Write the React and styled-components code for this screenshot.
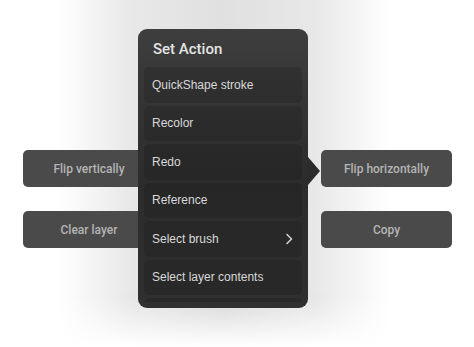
import React from "react";
import styled, { createGlobalStyle } from "styled-components";

const Global = createGlobalStyle`
  html, body { margin: 0; padding: 0; background: #fff; }
  * { box-sizing: border-box; }
`;

const Page = styled.div`
  width: 474px;
  height: 347px;
  overflow: hidden;
  display: flex;
  align-items: flex-start;
  padding: 29px 0 0 23px;
  font-family: "Liberation Sans", Arial, sans-serif;
  background:
    linear-gradient(to bottom, rgba(255,255,255,0) 296px, #fff 347px),
    radial-gradient(ellipse 130px 45px at 223px 318px, rgba(0,0,0,0.05), rgba(0,0,0,0)),
    linear-gradient(to right, #fff 58px, #e8e8e8 130px, #e0e0e0 223px, #e8e8e8 316px, #fff 390px);
`;

const SideColumn = styled.div`
  width: ${(p) => p.$width}px;
  margin-top: 121px;
  margin-left: ${(p) => p.$offset}px;
  display: flex;
  flex-direction: column;
  gap: 24px;
  flex-shrink: 0;
`;

const SideButton = styled.div`
  height: 37px;
  border-radius: 5px;
  background: #4a4a4a;
  color: #b4b4b4;
  font-family: Roboto, "Liberation Sans", sans-serif;
  font-size: 12px;
  font-weight: 500;
  display: flex;
  align-items: center;
  justify-content: center;
`;

const Menu = styled.div`
  position: relative;
  z-index: 1;
  flex-shrink: 0;
  width: 170px;
  height: 279px;
  margin-left: -17px;
  border-radius: 9px;
  padding: 0 6px 6px;
  display: flex;
  flex-direction: column;
  background: linear-gradient(to bottom, #3e3e3e 0%, #353535 25%, #2c2c2c 55%, #303030 100%);

  &::after {
    content: "";
    position: absolute;
    right: -12px;
    top: 128px;
    border-top: 14px solid transparent;
    border-bottom: 14px solid transparent;
    border-left: 12px solid #2b2b2b;
  }
`;

const Header = styled.div`
  height: 37px;
  flex-shrink: 0;
  padding-left: 9px;
  display: flex;
  align-items: center;
  padding-top: 2px;
  color: #e4e4e4;
  font-family: Roboto, "Liberation Sans", sans-serif;
  font-size: 15px;
  font-weight: 500;
`;

const List = styled.div`
  flex: 1;
  overflow: hidden;
  display: flex;
  flex-direction: column;
  gap: 2px;
`;

const Row = styled.div`
  flex-shrink: 0;
  height: 36.5px;
  border-radius: 5px;
  padding: 0 9px 0 8px;
  display: flex;
  align-items: center;
  justify-content: space-between;
  background: rgba(0, 0, 0, 0.13);
  border-top: 1px solid rgba(255, 255, 255, 0.035);
  color: #d9d9d9;
  font-size: 12px;
`;

const Chevron = () => (
  <svg width="8" height="12" viewBox="0 0 8 12">
    <polyline points="2,1.5 6.5,6 2,10.5" fill="none" stroke="#d0d0d0" strokeWidth="1.6" strokeLinecap="round" strokeLinejoin="round" />
  </svg>
);

const items = [
  { label: "QuickShape stroke" },
  { label: "Recolor" },
  { label: "Redo" },
  { label: "Reference" },
  { label: "Select brush", sub: true },
  { label: "Select layer contents" },
  { label: "" },
];

export default function App() {
  return (
    <>
      <Global />
      <Page>
        <SideColumn $width={132} $offset={0}>
          <SideButton>Flip vertically</SideButton>
          <SideButton>Clear layer</SideButton>
        </SideColumn>
        <Menu>
          <Header>Set Action</Header>
          <List>
            {items.map((it, i) => (
              <Row key={i}>
                <span>{it.label}</span>
                {it.sub && <Chevron />}
              </Row>
            ))}
          </List>
        </Menu>
        <SideColumn $width={131} $offset={13}>
          <SideButton>Flip horizontally</SideButton>
          <SideButton>Copy</SideButton>
        </SideColumn>
      </Page>
    </>
  );
}
